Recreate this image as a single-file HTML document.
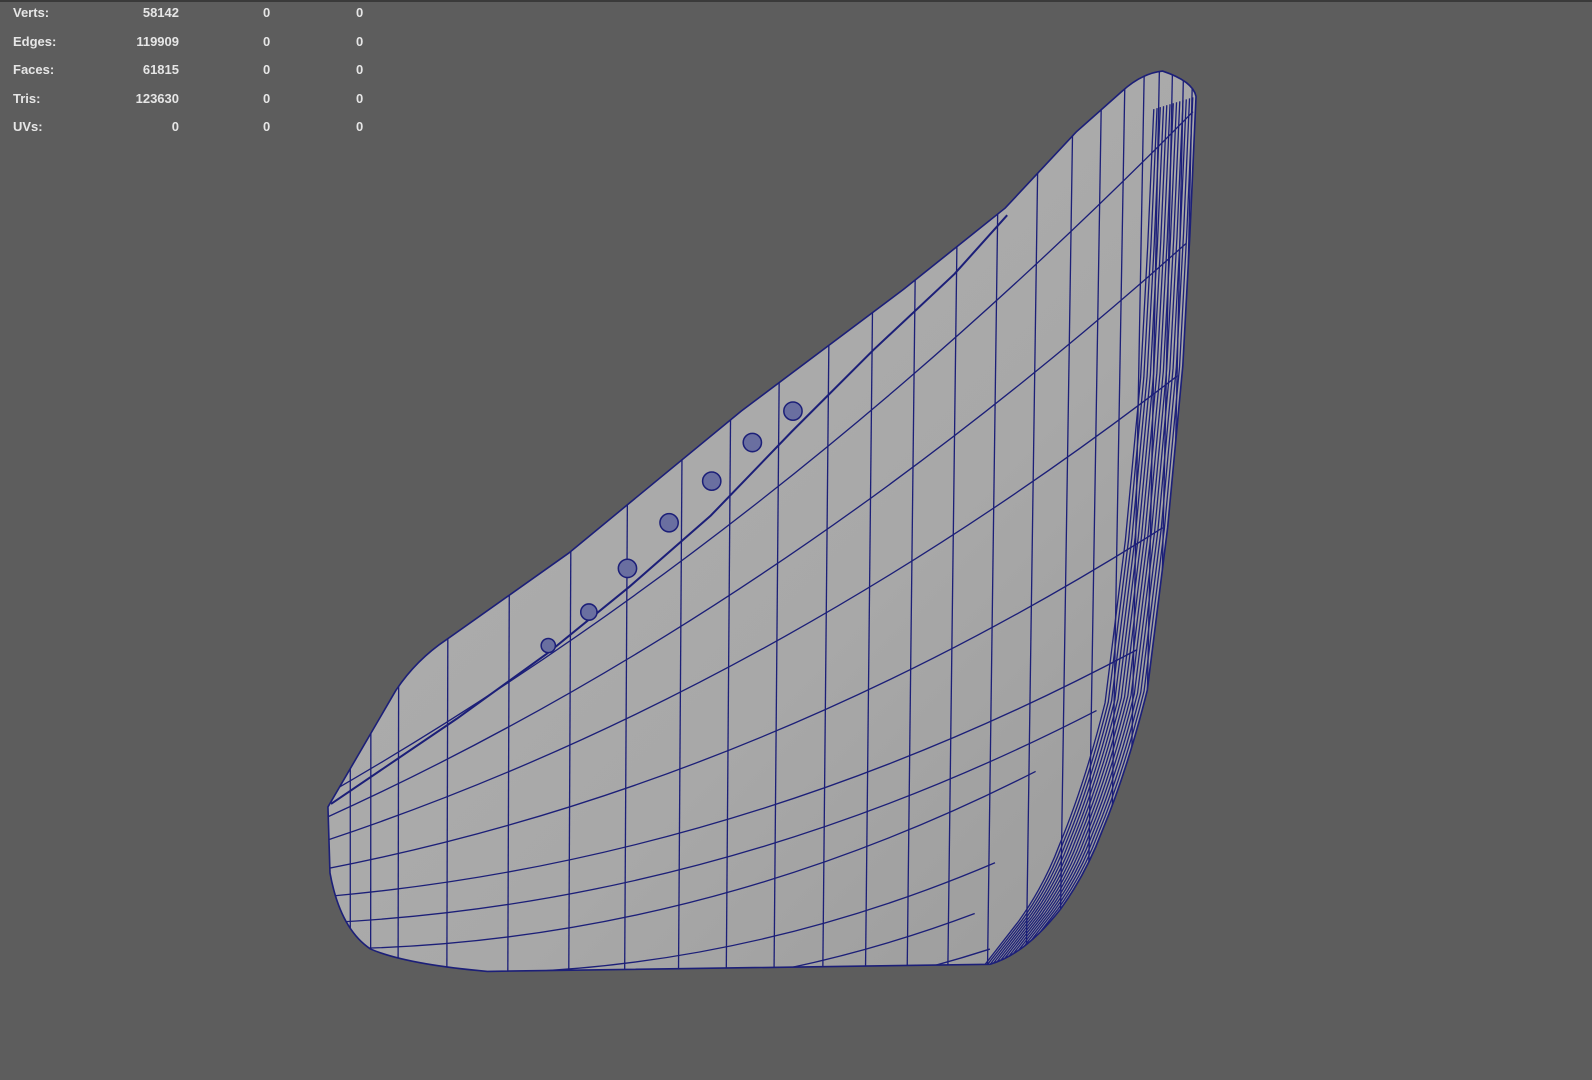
<!DOCTYPE html>
<html><head><meta charset="utf-8"><style>
html,body{margin:0;padding:0;background:#5d5d5d;width:1592px;height:1080px;overflow:hidden}
#top{position:absolute;left:0;top:0;width:1592px;height:2px;background:#3a3a3a}
.t{position:absolute;font:bold 13px "Liberation Sans",sans-serif;color:#e6e6e6}
svg{position:absolute;left:0;top:0}
</style></head><body>
<svg id="s" width="1592" height="1080" viewBox="0 0 1568 1064" preserveAspectRatio="none">
<defs>
<linearGradient id="g" x1="0" y1="0" x2="1" y2="1">
<stop offset="0" stop-color="#b0b0b0"/><stop offset="0.6" stop-color="#a8a8a8"/><stop offset="1" stop-color="#9a9a9a"/>
</linearGradient>
<clipPath id="c"><path d="M323,795 L325,860 Q335,915 365,935 Q400,950 480,957 L975,950 Q1010,940 1045,895 Q1070,860 1085,820 Q1110,760 1130,680 L1150,520 L1165,360 L1172,230 L1178,95 Q1175,80 1145,70 Q1125,72 1105,90 L1060,130 L990,205 L890,285 L730,405 L560,545 L440,630 Q410,650 390,680 Z"/></clipPath>
</defs>
<path d="M323,795 L325,860 Q335,915 365,935 Q400,950 480,957 L975,950 Q1010,940 1045,895 Q1070,860 1085,820 Q1110,760 1130,680 L1150,520 L1165,360 L1172,230 L1178,95 Q1175,80 1145,70 Q1125,72 1105,90 L1060,130 L990,205 L890,285 L730,405 L560,545 L440,630 Q410,650 390,680 Z" fill="url(#g)"/>
<g id="w" clip-path="url(#c)" stroke="#1c1f78" stroke-width="1.3" fill="none"></g>
<path d="M323,795 L325,860 Q335,915 365,935 Q400,950 480,957 L975,950 Q1010,940 1045,895 Q1070,860 1085,820 Q1110,760 1130,680 L1150,520 L1165,360 L1172,230 L1178,95 Q1175,80 1145,70 Q1125,72 1105,90 L1060,130 L990,205 L890,285 L730,405 L560,545 L440,630 Q410,650 390,680 Z" fill="none" stroke="#1c1f78" stroke-width="1.6"/>
<path d="M326,792 L450,708 L540,643 L620,578 L700,508 L780,425 L860,345 L940,270 L992,212" fill="none" stroke="#1c1f78" stroke-width="2"/>
<g fill="#6a6fa0" stroke="#1c1f78" stroke-width="1.5">
<circle cx="540" cy="636" r="7"/><circle cx="580" cy="603" r="8"/><circle cx="618" cy="560" r="9"/><circle cx="659" cy="515" r="9"/><circle cx="701" cy="474" r="9"/><circle cx="741" cy="436" r="9"/><circle cx="781" cy="405" r="9"/>
</g>
</svg>
<div id="top"></div>
<div class="t" style="left:13px;top:5px">Verts:</div><div class="t" style="left:13px;top:34px">Edges:</div><div class="t" style="left:13px;top:62px">Faces:</div><div class="t" style="left:13px;top:91px">Tris:</div><div class="t" style="left:13px;top:119px">UVs:</div>
<div class="t" style="right:1413px;top:5px">58142</div><div class="t" style="right:1413px;top:34px">119909</div><div class="t" style="right:1413px;top:62px">61815</div><div class="t" style="right:1413px;top:91px">123630</div><div class="t" style="right:1413px;top:119px">0</div>
<div class="t" style="left:263px;top:5px">0</div><div class="t" style="left:263px;top:34px">0</div><div class="t" style="left:263px;top:62px">0</div><div class="t" style="left:263px;top:91px">0</div><div class="t" style="left:263px;top:119px">0</div>
<div class="t" style="left:356px;top:5px">0</div><div class="t" style="left:356px;top:34px">0</div><div class="t" style="left:356px;top:62px">0</div><div class="t" style="left:356px;top:91px">0</div><div class="t" style="left:356px;top:119px">0</div>
<script>
var w=document.getElementById('w'),h='';
var xs=[345,365,392,440,500,560,615,668,715,762,810,852,893,933,972,1010,1043,1070,1092,1110,1124,1136,1146,1154,1161,1167];
xs.forEach(function(x,i){var lean=(i/xs.length)*25;h+='<path d="M'+(x+lean)+',0 Q'+(x+lean*0.5)+',500 '+x+',1000"/>';});
var re='1045,895 Q1070,860 1085,820 Q1110,760 1130,680 L1150,520 L1165,360 L1172,230 L1178,95';
for(var k=1;k<14;k++){var d=k*3.2;h+='<path transform="translate('+(-d)+','+(d*0.3)+')" d="M1010,940 L'+re+'"/>';}
var hs=[[795,1175,110],[815,1168,240],[835,1160,370],[860,1145,520],[885,1120,640],[910,1080,700],[935,1020,760],[950,980,850],[960,960,900],[965,975,935]];
hs.forEach(function(a){var y0=a[0],x1=a[1],y1=a[2];var cx=(323+x1)/2,cy=(y0+y1)/2+90;h+='<path d="M300,'+y0+' Q'+cx+','+cy+' '+x1+','+y1+'"/>';});
w.innerHTML=h;
</script>
</body></html>
